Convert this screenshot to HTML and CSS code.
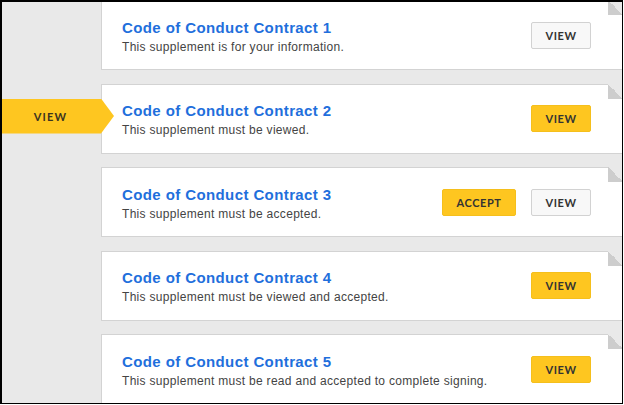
FILE: index.html
```html
<!DOCTYPE html>
<html lang="en">
<head>
<meta charset="utf-8">
<title>Supplements</title>
<link rel="stylesheet" href="styles.css">
</head>
<body>
<div class="frame">
  <div class="list">
    <div class="card">
      <div class="info">
        <div class="title">Code of Conduct Contract 1</div>
        <div class="desc">This supplement is for your information.</div>
      </div>
      <div class="actions">
        <button class="btn btn-light btn-view">VIEW</button>
      </div>
      <span class="fold"></span>
    </div>
    <div class="card card-current">
      <div class="tab">VIEW</div>
      <div class="info">
        <div class="title">Code of Conduct Contract 2</div>
        <div class="desc">This supplement must be viewed.</div>
      </div>
      <div class="actions">
        <button class="btn btn-yellow btn-view">VIEW</button>
      </div>
      <span class="fold"></span>
    </div>
    <div class="card">
      <div class="info">
        <div class="title">Code of Conduct Contract 3</div>
        <div class="desc">This supplement must be accepted.</div>
      </div>
      <div class="actions">
        <button class="btn btn-yellow btn-accept">ACCEPT</button>
        <button class="btn btn-light btn-view">VIEW</button>
      </div>
      <span class="fold"></span>
    </div>
    <div class="card">
      <div class="info">
        <div class="title">Code of Conduct Contract 4</div>
        <div class="desc">This supplement must be viewed and accepted.</div>
      </div>
      <div class="actions">
        <button class="btn btn-yellow btn-view">VIEW</button>
      </div>
      <span class="fold"></span>
    </div>
    <div class="card">
      <div class="info">
        <div class="title">Code of Conduct Contract 5</div>
        <div class="desc">This supplement must be read and accepted to complete signing.</div>
      </div>
      <div class="actions">
        <button class="btn btn-yellow btn-view">VIEW</button>
      </div>
      <span class="fold"></span>
    </div>
  </div>
</div>
</body>
</html>
```

FILE: styles.css
```css
* {
  box-sizing: border-box;
}

html, body {
  margin: 0;
  padding: 0;
  background: #ffffff;
}

body {
  font-family: "Liberation Sans", Arial, sans-serif;
}

.frame {
  width: 623px;
  height: 404px;
  border-style: solid;
  border-color: #000000;
  border-width: 2px 1px 1px 2px;
  background: #e9e9e9;
  overflow: hidden;
}

.list {
  display: flex;
  flex-direction: column;
  gap: 13.5px;
  margin: -2px -1px 0 99px;
}

.card {
  position: relative;
  height: 70px;
  flex: none;
  display: flex;
  align-items: center;
  justify-content: space-between;
  padding: 0 31px 0 20px;
  background: #ffffff;
  border: 1px solid #d3d3d3;
}

.info {
  padding-top: 3px;
}

.title {
  font-size: 15px;
  line-height: 18px;
  font-weight: 700;
  letter-spacing: 0.4px;
  color: #1f6fdc;
  margin-bottom: 2px;
}

.desc {
  font-size: 12px;
  line-height: 16px;
  letter-spacing: 0.3px;
  color: #444444;
}

.actions {
  display: flex;
  align-items: center;
  gap: 15px;
}

.btn {
  height: 27px;
  padding: 0;
  border-radius: 2px;
  font-family: Lato, "Liberation Sans", sans-serif;
  font-size: 11px;
  font-weight: 700;
  letter-spacing: 0.6px;
  color: #333333;
  cursor: pointer;
}

.btn-view {
  width: 60px;
}

.btn-accept {
  width: 74px;
}

.btn-light {
  background: #f8f8f8;
  border: 1px solid #d2d2d2;
}

.btn-yellow {
  background: #fec620;
  border: 1px solid #f5bf1c;
}

.fold {
  position: absolute;
  top: -1px;
  right: -1px;
  width: 15px;
  height: 15px;
  background: linear-gradient(to bottom left, #e9e9e9 50%, #cdcdcd 50%);
}

.tab {
  position: absolute;
  top: 14px;
  left: -102px;
  width: 114px;
  height: 35px;
  padding-right: 13px;
  background: #fec620;
  clip-path: polygon(0 0, 101px 0, 114px 50%, 101px 100%, 0 100%);
  display: flex;
  align-items: center;
  justify-content: center;
  font-family: Lato, "Liberation Sans", sans-serif;
  font-size: 11px;
  font-weight: 700;
  letter-spacing: 1.2px;
  color: #3b3320;
}
```
